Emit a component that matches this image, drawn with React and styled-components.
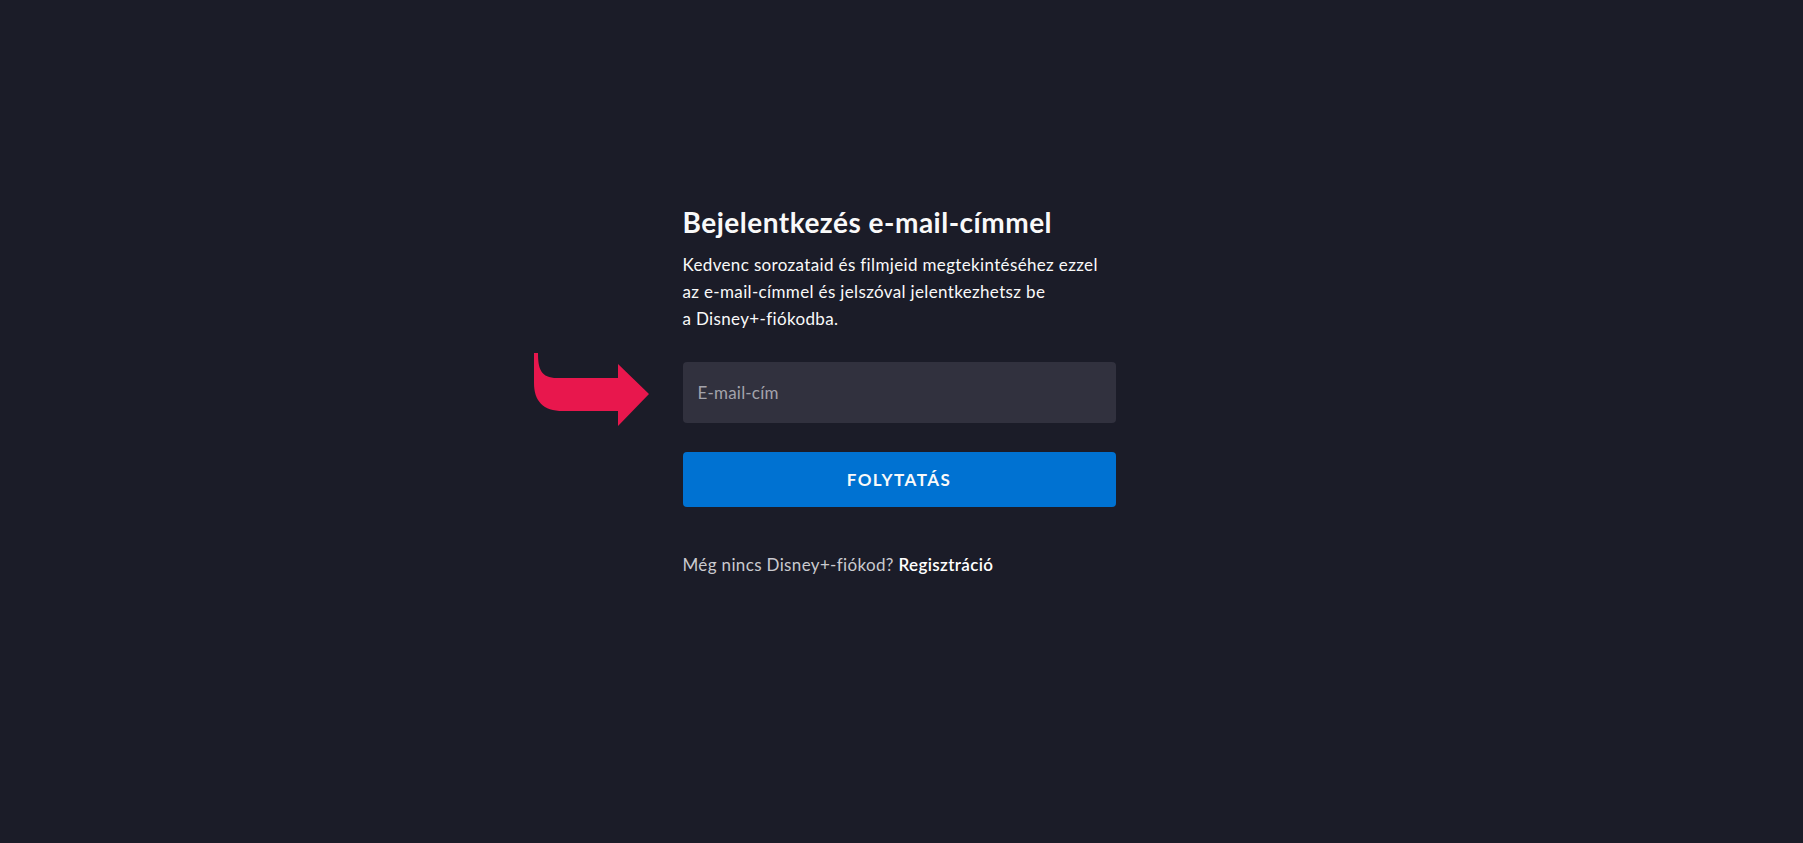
import styled, { createGlobalStyle } from "styled-components";

const GlobalStyle = createGlobalStyle`
  body {
    margin: 0;
    background: #1b1c28;
    font-family: Lato, "Open Sans", sans-serif;
  }
`;

const Page = styled.div`
  min-height: 843px;
  display: flex;
  justify-content: center;
  padding-top: 205px;
  box-sizing: border-box;
`;

const Column = styled.div`
  width: 433px;
  display: flex;
  flex-direction: column;
  margin-left: -5px;
`;

const Title = styled.h1`
  margin: 0;
  font-size: 28px;
  line-height: 34px;
  font-weight: 700;
  color: #f9f9f9;
  letter-spacing: 0.5px;
`;

const Lead = styled.p`
  margin: 12px 0 0 0;
  font-size: 17px;
  line-height: 27px;
  letter-spacing: 0.35px;
  color: #f9f9f9;
`;

const FieldRow = styled.div`
  position: relative;
  margin-top: 30px;
`;

const Field = styled.input`
  width: 100%;
  height: 61px;
  box-sizing: border-box;
  border: none;
  border-radius: 4px;
  background: #31313e;
  padding: 0 15px;
  font-family: inherit;
  font-size: 17px;
  letter-spacing: 0.2px;
  color: #f9f9f9;
  outline: none;

  &::placeholder {
    color: #a3a3ab;
  }
`;

const Pointer = styled.svg`
  position: absolute;
  left: -152px;
  top: -11px;
  width: 120px;
  height: 78px;
`;

const Submit = styled.button`
  margin-top: 29px;
  height: 55px;
  border: none;
  border-radius: 4px;
  background: #0072d2;
  color: #f9f9f9;
  font-family: inherit;
  font-size: 17px;
  font-weight: 700;
  letter-spacing: 1.5px;
  cursor: pointer;
`;

const Footer = styled.p`
  margin: 46px 0 0 0;
  font-size: 17px;
  line-height: 24px;
  letter-spacing: 0.35px;
  color: #cacacf;
`;

const SignUp = styled.a`
  color: #ffffff;
  text-decoration: none;
  font-weight: 600;
`;

export default function App() {
  return (
    <>
      <GlobalStyle />
      <Page>
        <Column>
          <Title>Bejelentkezés e-mail-címmel</Title>
          <Lead>
            Kedvenc sorozataid és filmjeid megtekintéséhez ezzel
            <br />
            az e-mail-címmel és jelszóval jelentkezhetsz be
            <br />a Disney+-fiókodba.
          </Lead>
          <FieldRow>
            <Pointer viewBox="0 0 120 78">
              <path
                d="M3 2 L7 2 C7 18 10 27 26 27 L87 27 L87 13 L118 43 L87 75 L87 60 L32 60 C12 60 3 50 3 32 Z"
                fill="#e8174d"
              />
            </Pointer>
            <Field type="email" placeholder="E-mail-cím" />
          </FieldRow>
          <Submit>FOLYTATÁS</Submit>
          <Footer>
            Még nincs Disney+-fiókod? <SignUp href="#">Regisztráció</SignUp>
          </Footer>
        </Column>
      </Page>
    </>
  );
}
